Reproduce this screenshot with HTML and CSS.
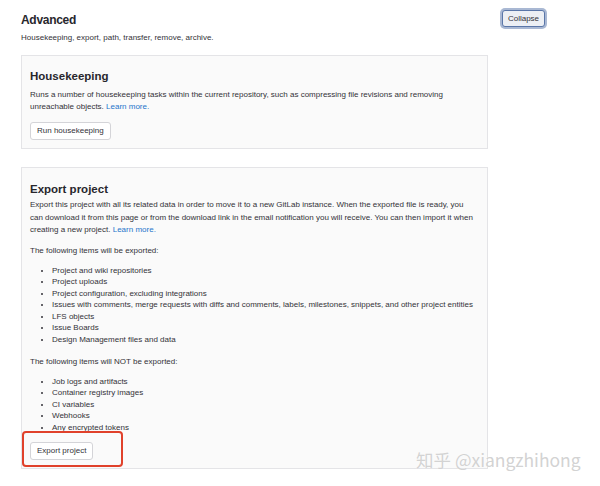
FILE: index.html
```html
<!DOCTYPE html>
<html>
<head>
<meta charset="utf-8">
<link rel="stylesheet" href="styles.css">
</head>
<body>
<div class="page">
  <header class="section-head">
    <div class="head-text">
      <h2 class="section-title">Advanced</h2>
      <p class="section-sub">Housekeeping, export, path, transfer, remove, archive.</p>
    </div>
    <button class="btn btn-focus">Collapse</button>
  </header>

  <section class="panel panel-hk">
    <h3 class="panel-title">Housekeeping</h3>
    <p class="para">Runs a number of housekeeping tasks within the current repository, such as compressing file revisions and removing unreachable objects. <a class="link">Learn more.</a></p>
    <button class="btn">Run housekeeping</button>
  </section>

  <section class="panel panel-export">
    <h3 class="panel-title">Export project</h3>
    <p class="para para-wide">Export this project with all its related data in order to move it to a new GitLab instance. When the exported file is ready, you can download it from this page or from the download link in the email notification you will receive. You can then import it when creating a new project. <a class="link">Learn more.</a></p>
    <p class="para gap">The following items will be exported:</p>
    <ul class="items">
      <li>Project and wiki repositories</li>
      <li>Project uploads</li>
      <li>Project configuration, excluding integrations</li>
      <li>Issues with comments, merge requests with diffs and comments, labels, milestones, snippets, and other project entities</li>
      <li>LFS objects</li>
      <li>Issue Boards</li>
      <li>Design Management files and data</li>
    </ul>
    <p class="para gap gap-lg">The following items will NOT be exported:</p>
    <ul class="items">
      <li>Job logs and artifacts</li>
      <li>Container registry images</li>
      <li>CI variables</li>
      <li>Webhooks</li>
      <li>Any encrypted tokens</li>
    </ul>
    <button class="btn btn-export">Export project</button>
    <div class="highlight"></div>
  </section>

  <div class="watermark">知乎 @xiangzhihong</div>
</div>
</body>
</html>
```

FILE: styles.css
```css
* { box-sizing: border-box; }
html, body { margin: 0; padding: 0; background: #fff; }
body {
  font-family: "Liberation Sans", Arial, sans-serif;
  color: #333238;
  width: 600px;
  height: 486px;
  overflow: hidden;
}
.page {
  position: relative;
  padding: 9px 0 0 21px;
  height: 486px;
}
.section-head {
  display: flex;
  justify-content: space-between;
  align-items: flex-start;
  width: 525px;
}
.section-title {
  margin: 2px 0 0;
  font-size: 12px;
  letter-spacing: -0.3px;
  line-height: 18px;
  font-weight: 700;
  color: #28272d;
}
.section-sub {
  margin: 3px 0 0;
  font-size: 8px;
  line-height: 12px;
}
.btn {
  font-family: inherit;
  font-size: 8px;
  color: #333238;
  background: #fff;
  border: 1px solid #d4d4d8;
  border-radius: 3px;
  height: 18px;
  padding: 0 6px;
  line-height: 16px;
  cursor: pointer;
  display: block;
}
.btn-focus {
  background: #eceff4;
  border: 1px solid #5a76a8;
  box-shadow: 0 0 0 2px #a9b8d3;
  height: 17px;
  width: 43px;
  padding: 0;
  margin: 1px 1px 0 0;
}
.panel {
  width: 467px;
  background: #fafafa;
  border: 1px solid #e4e4e7;
  padding: 0 8px 8px 8px;
}
.panel-hk { margin-top: 11px; padding-top: 12px; }
.panel-export { margin-top: 18px; padding-top: 13px; position: relative; }
.panel-title {
  margin: 0;
  font-size: 11.5px;
  line-height: 16px;
  font-weight: 700;
  color: #28272d;
}
.para {
  margin: 5px 0 0;
  font-size: 8px;
  line-height: 12px;
}
.para-wide { line-height: 12.5px; margin-top: 2px; padding-right: 2px; }
.para.gap { margin-top: 8px; }
.para.gap-lg { margin-top: 10px; }
.link { color: #1f75cb; text-decoration: none; }
.panel-hk .btn { margin-top: 9px; }
.items {
  margin: 8px 0 0;
  padding-left: 22px;
  font-size: 8px;
  line-height: 11.6px;
}
.btn-export { margin-top: 8px; }
.highlight {
  position: absolute;
  left: 0;
  top: 263px;
  width: 101px;
  height: 36px;
  border: 2px solid #e0412b;
  border-radius: 4px;
}
.watermark {
  position: absolute;
  left: 416px;
  top: 448px;
  font-family: "Noto Sans CJK SC", "Liberation Sans", sans-serif;
  font-size: 17.5px;
  line-height: 24px;
  color: rgba(205, 205, 205, 0.9);
  text-shadow: 0 0 1px rgba(255,255,255,0.8);
  white-space: nowrap;
}
```
